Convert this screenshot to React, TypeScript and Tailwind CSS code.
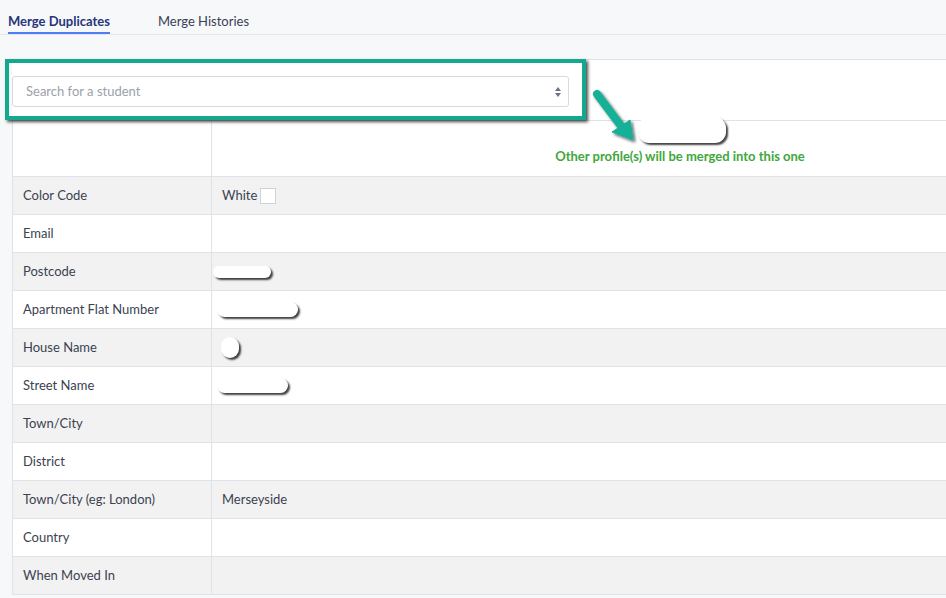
import React from 'react'

type Row = { label: string; value?: React.ReactNode }

function Blot({ w, h, ml = 0 }: { w: number; h: number; ml?: number }) {
  return (
    <span
      className="inline-block rounded-full bg-white shadow-[2px_2px_2px_rgba(0,0,0,0.75)]"
      style={{ width: w, height: h, marginLeft: ml }}
    />
  )
}

const rows: Row[] = [
  {
    label: 'Color Code',
    value: (
      <span className="flex items-center gap-[3px]">
        White
        <span className="inline-block h-[16px] w-[16px] border border-[#cfd3d8] bg-white" />
      </span>
    ),
  },
  { label: 'Email' },
  { label: 'Postcode', value: <Blot w={58} h={12} ml={-9} /> },
  { label: 'Apartment Flat Number', value: <Blot w={81} h={15} ml={-5} /> },
  { label: 'House Name', value: <Blot w={18} h={21} ml={-1} /> },
  { label: 'Street Name', value: <Blot w={71} h={15} ml={-5} /> },
  { label: 'Town/City' },
  { label: 'District' },
  { label: 'Town/City (eg: London)', value: 'Merseyside' },
  { label: 'Country' },
  { label: 'When Moved In' },
]

function Arrow() {
  return (
    <svg
      className="pointer-events-none absolute left-0 top-0"
      width="946"
      height="598"
      viewBox="0 0 946 598"
    >
      <defs>
        <filter id="sh" x="-50%" y="-50%" width="200%" height="200%">
          <feDropShadow dx="2" dy="2" stdDeviation="1.5" floodColor="#000" floodOpacity="0.6" />
        </filter>
      </defs>
      <g filter="url(#sh)" fill="#17b096" stroke="#17b096">
        <line x1="597" y1="94" x2="621" y2="126" strokeWidth="8" strokeLinecap="round" />
        <polygon points="612,132 630,120 633,140" strokeWidth="1" strokeLinejoin="round" />
      </g>
    </svg>
  )
}

export default function App() {
  return (
    <div
      className="relative h-[598px] w-[946px] overflow-hidden bg-[#f7f8fa] text-[13px] text-[#3b4250]"
      style={{ fontFamily: 'Lato, "Liberation Sans", sans-serif' }}
    >
      <div className="flex h-[35px] items-end gap-[48px] border-b border-[#e2e5ea] px-[8px]">
        <div className="border-b-2 border-[#4f7cf5] pb-[1px] text-[13px] font-bold text-[#27357a]">
          Merge Duplicates
        </div>
        <div className="pb-[3px] text-[13px] text-[#3a3f52]">Merge Histories</div>
      </div>

      <div className="mt-[24px] ml-[12px] w-[1136px] border-t border-[#dfe2e7] bg-white">
        <div className="h-[61px] border-b border-[#dfe2e7] pt-[16px]">
          <div className="flex h-[31px] w-[557px] items-center justify-between rounded-[3px] border border-[#d5dbe2] bg-white pl-[13px] pr-[6px] text-[#9ba1aa]">
            <span>Search for a student</span>
            <svg width="8" height="12" viewBox="0 0 8 12" fill="#6b7280">
              <polygon points="4,1 7,5 1,5" />
              <polygon points="1,7 7,7 4,11" />
            </svg>
          </div>
        </div>

        <div className="grid h-[56px] grid-cols-[200px_936px] border-b border-[#dfe2e7]">
          <div className="border-l border-r border-[#dfe2e7]" />
          <div className="relative z-10 flex flex-col items-center">
            <span className="-mt-[4px] ml-[3px] inline-block h-[26px] w-[88px] rounded-[11px] bg-white shadow-[2px_2px_2px_rgba(0,0,0,0.75)]" />
            <div className="mt-[4px] text-[13px] font-bold text-[#3fa73c]">
              Other profile(s) will be merged into this one
            </div>
          </div>
        </div>

        {rows.map((r, i) => (
          <div
            key={r.label}
            className={`grid h-[38px] grid-cols-[200px_936px] border-b border-[#dfe2e7] ${
              i % 2 === 0 ? 'bg-[#f2f2f2]' : 'bg-white'
            }`}
          >
            <div className="flex items-center border-l border-r border-[#dfe2e7] pl-[10px]">
              {r.label}
            </div>
            <div className="flex items-center pl-[10px]">{r.value}</div>
          </div>
        ))}
      </div>

      <div className="pointer-events-none absolute left-[5px] top-[59px] h-[61px] w-[581px] border-[4px] border-[#14a98e] shadow-[2px_2px_3px_rgba(0,0,0,0.7)]" />
      <Arrow />
    </div>
  )
}
